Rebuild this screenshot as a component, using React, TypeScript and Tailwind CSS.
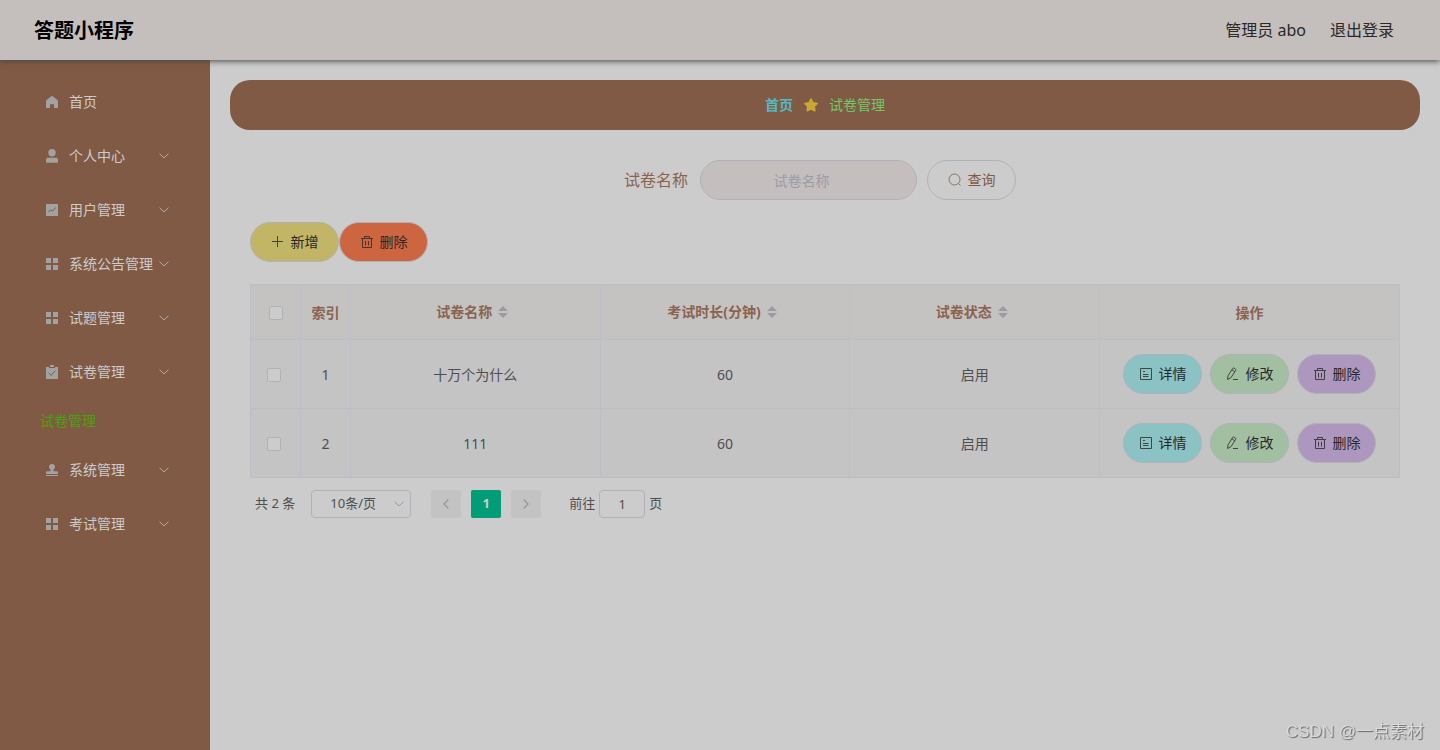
import { useState } from "react";
import type { ReactNode } from "react";

type IconProps = { className?: string };

const HomeIcon = () => (
  <svg viewBox="0 0 14 14" className="size-3.5 shrink-0" fill="currentColor">
    <path d="M7 .8 13 5.6V13H9V9.200H5V13H1V5.600z" />
  </svg>
);

const UserIcon = () => (
  <svg viewBox="0 0 14 14" className="size-3.5 shrink-0" fill="currentColor">
    <circle cx="7" cy="3.800" r="3.700" />
    <path d="M3 8.800h8a2 2 0 0 1 2 2V13a.8.8 0 0 1-.8.8H1.800A.8.8 0 0 1 1 13v-2.200a2 2 0 0 1 2-2z" />
  </svg>
);

const ChartIcon = () => (
  <svg viewBox="0 0 14 14" className="size-3.5 shrink-0" fill="currentColor">
    <path d="M1 1h12v12H1z" />
    <path d="m3.200 9.300 2.400-2.500 1.900 1.400 3.300-3.800" fill="none" stroke="#805a45" />
  </svg>
);

const GridIcon = () => (
  <svg viewBox="0 0 14 14" className="size-3.5 shrink-0" fill="currentColor">
    <path d="M1 1h5v5H1zM8 1h5v5H8zM1 8h5v5H1zM8 8h5v5H8z" />
  </svg>
);

const ClipboardIcon = () => (
  <svg viewBox="0 0 14 14" className="size-3.5 shrink-0" fill="currentColor">
    <path d="M5 0h4v2H5z" />
    <path d="M1 2h3v1h6V2h3v12H1z" />
    <path d="m3.800 8 2.400 2.200L10.400 5.800" fill="none" stroke="#805a45" />
  </svg>
);

const StampIcon = () => (
  <svg viewBox="0 0 14 14" className="size-3.5 shrink-0" fill="currentColor">
    <path d="M7 1a3 3 0 0 1 3 3c0 1.400-1.500 2-1.500 3v1.300H12a1 1 0 0 1 1 1V11H1V9.300a1 1 0 0 1 1-1h3.500V7c0-1-1.500-1.600-1.500-3a3 3 0 0 1 3-3zM1 12h12v1H1z" />
  </svg>
);

const ChevronIcon = ({ className }: IconProps) => (
  <svg viewBox="0 0 12 12" className={className} fill="none" stroke="currentColor">
    <path d="m1.500 3.700 4.500 4.200 4.500-4.200" />
  </svg>
);

const StarIcon = () => (
  <svg viewBox="0 0 16 16" className="size-4" fill="#c9a834" stroke="#c9a834" strokeWidth="1.600" strokeLinejoin="round">
    <path d="m8 2 1.900 3.900 4.300.6-3.100 3 .7 4.200L8 11.700l-3.800 2 .7-4.200-3.100-3 4.300-.6z" />
  </svg>
);

const SearchIcon = () => (
  <svg viewBox="0 0 14 14" className="size-3.5" fill="none" stroke="currentColor">
    <circle cx="6.500" cy="6.500" r="5.500" />
    <path d="m10.500 10.500 2 2" />
  </svg>
);

const PlusIcon = () => (
  <svg viewBox="0 0 14 14" className="size-3.5" fill="none" stroke="currentColor">
    <path d="M6.500 1v11M1 6.500h11" />
  </svg>
);

const TrashIcon = () => (
  <svg viewBox="0 0 14 14" className="size-3.5" fill="none" stroke="currentColor">
    <path d="M1 3.500h12M4.500 3.300V1.500h5v1.800M2.500 3.500v9h9v-9M5.500 6v4.500M8.500 6v4.500" />
  </svg>
);

const DetailIcon = () => (
  <svg viewBox="0 0 14 14" className="size-3.5" fill="none" stroke="currentColor">
    <path d="M1.500 1.500h11v11h-11zM4 4.500h2M4 7.500h5.500M4 9.500h5.500" />
  </svg>
);

const EditIcon = () => (
  <svg viewBox="0 0 14 14" className="size-3.5" fill="none" stroke="currentColor">
    <path d="m1.500 12.500.5-3.700 4.700-7.400a1 1 0 0 1 1.300-.3l1.400.9a1 1 0 0 1 .3 1.300L5 10.600zM5.900 2.800l2.900 1.900M7 12.500h5" />
  </svg>
);

const SortIcon = () => (
  <svg viewBox="0 0 10 12" className="h-3 w-2.5" fill="#9a9ca1">
    <path d="M5 0l5 5H0zM5 12l5-5H0z" />
  </svg>
);

const menu: { label: string; icon: ReactNode; children?: string[]; leaf?: boolean }[] = [
  { label: "首页", icon: <HomeIcon />, leaf: true },
  { label: "个人中心", icon: <UserIcon /> },
  { label: "用户管理", icon: <ChartIcon /> },
  { label: "系统公告管理", icon: <GridIcon /> },
  { label: "试题管理", icon: <GridIcon /> },
  { label: "试卷管理", icon: <ClipboardIcon />, children: ["试卷管理"] },
  { label: "系统管理", icon: <StampIcon /> },
  { label: "考试管理", icon: <GridIcon /> },
];

const papers = [
  { id: 1, name: "十万个为什么", minutes: 60, status: "启用" },
  { id: 2, name: "111", minutes: 60, status: "启用" },
];

const checkbox =
  "block size-3.5 appearance-none rounded-xs border border-[#b0b2b8] bg-[#cccccc] checked:bg-[#009d77]";
const pill =
  "flex h-10 items-center justify-center gap-1.5 rounded-full border border-[#b0b2b8] text-sm [&>svg]:opacity-80";
const border = "border border-[#bcbdc5]";
const cell = `${border} px-0 pt-0.5 pb-0`;

function Header() {
  return (
    <header className="relative z-10 flex h-15 items-center justify-between bg-[#c4bebd] pr-11.5 pl-8.5 shadow-[0_1px_6px_#444]">
      <h1 className="pt-0.5 text-xl font-bold text-black">答题小程序</h1>
      <div className="flex items-center gap-6 text-base text-[#292929]">
        <span>管理员 abo</span>
        <button type="button">退出登录</button>
      </div>
    </header>
  );
}

function Sidebar() {
  return (
    <nav className="w-52.5 shrink-0 bg-[#805a45] pt-[15px] text-sm text-[#cccccc]">
      <ul>
        {menu.map((item) => (
          <li key={item.label}>
            <a href="#" className="flex h-13.5 items-center pr-10 pl-[45px]">
              <span className="text-[#a2a2a2]">{item.icon}</span>
              <span className="ml-2.5 flex-1 whitespace-nowrap">{item.label}</span>
              {!item.leaf && <ChevronIcon className="size-3 shrink-0 text-[#b3aaa5]" />}
            </a>
            {item.children?.map((child) => (
              <a key={child} href="#" className="flex h-11 items-center pl-10 text-[#4ba30a]">
                {child}
              </a>
            ))}
          </li>
        ))}
      </ul>
    </nav>
  );
}

function PaperTable() {
  return (
    <table className="mt-5.5 w-full table-fixed border-collapse bg-[#c4c4c4] text-center text-sm text-[#4d4e52]">
      <colgroup>
        <col className="w-[50px]" />
        <col className="w-[50px]" />
        <col />
        <col />
        <col />
        <col className="w-[300px]" />
      </colgroup>
      <thead className="bg-[#c5c3c1] text-[#8a6350]">
        <tr className="h-[55px]">
          <th className={cell}>
            <input type="checkbox" aria-label="全选" className={`${checkbox} mx-auto`} />
          </th>
          <th className={cell}>索引</th>
          {["试卷名称", "考试时长(分钟)", "试卷状态"].map((title) => (
            <th key={title} className={`${border} p-0`}>
              <button type="button" className="inline-flex items-center gap-1.5 pr-1.5 font-bold">
                {title}
                <SortIcon />
              </button>
            </th>
          ))}
          <th className={cell}>操作</th>
        </tr>
      </thead>
      <tbody>
        {papers.map((paper) => (
          <tr key={paper.id} className="h-[69px]">
            <td className={cell}>
              <input type="checkbox" aria-label={paper.name} className={`${checkbox} ml-4`} />
            </td>
            <td className={cell}>{paper.id}</td>
            <td className={cell}>{paper.name}</td>
            <td className={cell}>{paper.minutes}</td>
            <td className={cell}>{paper.status}</td>
            <td className={`${border} p-0`}>
              <div className="flex justify-center gap-2 text-[#292929]">
                <button type="button" className={`${pill} w-[79px] bg-[#8bc3c4]`}>
                  <DetailIcon />
                  详情
                </button>
                <button type="button" className={`${pill} w-[79px] bg-[#a3bfa2]`}>
                  <EditIcon />
                  修改
                </button>
                <button type="button" className={`${pill} w-[79px] bg-[#ae97be]`}>
                  <TrashIcon />
                  删除
                </button>
              </div>
            </td>
          </tr>
        ))}
      </tbody>
    </table>
  );
}

function Pagination() {
  const [page, setPage] = useState("1");

  return (
    <div className="mt-3 flex h-7 items-center pl-[5px] text-[13px] text-[#4d4e52]">
      <span>共 2 条</span>
      <div className="relative ml-4">
        <select
          aria-label="每页条数"
          className="block h-7 w-25 appearance-none rounded-sm border border-[#b0b2b8] pr-4 text-center"
        >
          <option>10条/页</option>
          <option>20条/页</option>
        </select>
        <ChevronIcon className="pointer-events-none absolute top-2 right-1.5 size-3 text-[#9a9ca1]" />
      </div>
      <div className="ml-5 flex gap-2.5">
        <button type="button" aria-label="上一页" className="flex h-7 w-7.5 items-center justify-center rounded-xs bg-[#c3c3c4] text-[#9a9ca1]">
          <ChevronIcon className="size-3 rotate-90 stroke-[1.5]" />
        </button>
        <button type="button" className="h-7 w-7.5 rounded-xs bg-[#009d77] font-bold text-[#cccccc]">
          1
        </button>
        <button type="button" aria-label="下一页" className="flex h-7 w-7.5 items-center justify-center rounded-xs bg-[#c3c3c4] text-[#9a9ca1]">
          <ChevronIcon className="size-3 -rotate-90 stroke-[1.5]" />
        </button>
      </div>
      <label className="ml-7 flex items-center gap-1">
        前往
        <input
          value={page}
          onChange={(e) => setPage(e.target.value)}
          className="h-7 w-11.5 rounded-sm border border-[#b0b2b8] text-center"
        />
        页
      </label>
    </div>
  );
}

export default function App() {
  return (
    <div className="flex min-h-screen flex-col bg-[#cccccc] font-['Noto_Sans','Noto_Sans_CJK_SC',sans-serif]">
      <Header />
      <div className="flex flex-1">
        <Sidebar />
        <main className="min-w-0 flex-1 p-5">
          <div className="flex h-12.5 items-center justify-center gap-2.5 rounded-[20px] bg-[#805a45] text-sm">
            <a href="#" className="font-bold text-[#56b9c2]">
              首页
            </a>
            <StarIcon />
            <span className="text-[#74c765]">试卷管理</span>
          </div>
          <div className="px-5 pt-7.5">
            <form className="flex items-center justify-center pr-2.5" onSubmit={(e) => e.preventDefault()}>
              <label htmlFor="paper-name" className="text-base text-[#8a6350]">
                试卷名称
              </label>
              <input
                id="paper-name"
                placeholder="试卷名称"
                className="ml-3 h-10 w-[217px] rounded-full border border-[#b0b2b8] bg-[#c5bebe] pr-7.5 pl-4 text-center text-sm placeholder:text-[#9a9ca6]"
              />
              <button type="submit" className={`${pill} ml-2.5 w-[89px] text-[#805a45]`}>
                <SearchIcon />
                查询
              </button>
            </form>
            <div className="mt-5.5 flex text-[#292929]">
              <button type="button" className={`${pill} w-[89px] bg-[#c3b566]`}>
                <PlusIcon />
                新增
              </button>
              <button type="button" className={`${pill} w-[89px] bg-[#cc6540]`}>
                <TrashIcon />
                删除
              </button>
            </div>
            <PaperTable />
            <Pagination />
          </div>
        </main>
      </div>
      <p className="fixed right-4 bottom-1.5 z-20 font-['Liberation_Sans','Noto_Sans_CJK_SC',sans-serif] text-[17px] leading-6 text-[#dadada] [text-shadow:1px_1px_1px_#666]">
        CSDN @一点素材
      </p>
    </div>
  );
}
